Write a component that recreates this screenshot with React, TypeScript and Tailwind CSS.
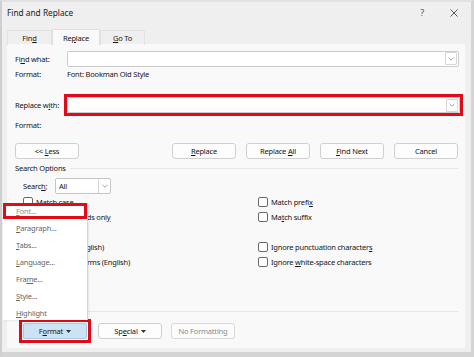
import React from "react";

function U({ children }: { children: React.ReactNode }) {
  return <span className="underline underline-offset-[1px] decoration-[0.5px]">{children}</span>;
}

function Chevron() {
  return (
    <svg width="6" height="4" viewBox="0 0 6 4" className="block">
      <path d="M0.5 0.8 L3 3.2 L5.5 0.8" fill="none" stroke="#8a8a8a" strokeWidth="0.8" />
    </svg>
  );
}

function Caret() {
  return (
    <svg width="5" height="3" viewBox="0 0 5 3" className="inline-block ml-[3px]">
      <path d="M0 0 L5 0 L2.5 3 Z" fill="#333" />
    </svg>
  );
}

function Btn({ children, disabled }: { children: React.ReactNode; disabled?: boolean }) {
  return (
    <div
      className={
        disabled
          ? "w-[64px] h-[16px] flex items-center justify-center bg-[#fbfbfb] border border-[#d9d9d9] rounded-[3px] text-[#8c8c8c]"
          : "w-[64px] h-[16px] flex items-center justify-center bg-[#fdfdfd] border border-[#d0d0d0] rounded-[3px]"
      }
    >
      <span className="whitespace-pre flex items-center">{children}</span>
    </div>
  );
}

function Input() {
  return (
    <div className="flex-1 h-[16px] bg-white border border-[#cbcbcb] rounded-[2px] flex items-center justify-end pr-[1px]">
      <div className="w-[12px] h-[13px] border border-[#d6d6d6] rounded-[1px] bg-white flex items-center justify-center">
        <Chevron />
      </div>
    </div>
  );
}

function Check({ label }: { label?: React.ReactNode }) {
  return (
    <div className="flex items-center h-[15px]">
      {label !== undefined && (
        <>
          <div className="w-[10px] h-[10px] border border-[#6a6a6a] rounded-[2px] bg-white" />
          <span className="ml-[3px] whitespace-nowrap">{label}</span>
        </>
      )}
    </div>
  );
}

export default function App() {
  return (
    <div className="w-[474px] h-[357px] relative overflow-hidden bg-[#efefef] border-l-[2px] border-l-[#cfcfcf] border-r-[3px] border-r-[#d4d4d4] border-b-[5px] border-b-[#d4d4d4] border-t-[2px] border-t-[#e2e2e2] font-['Noto_Sans',sans-serif] text-[7.5px] tracking-[-0.2px] leading-[10px] text-[#141414]">
      {/* Title bar */}
      <div className="h-[27px] flex items-start pt-[5px] pl-[5px] pr-[13px]">
        <span className="text-[8.3px] tracking-[0px] leading-[12px] text-[#1a1a1a]">Find and Replace</span>
        <span className="ml-auto text-[9px] leading-[12px] text-[#555]">?</span>
        <svg width="8" height="8" viewBox="0 0 8 8" className="ml-[26px] mt-[2px]">
          <path d="M0.5 0.5 L7.5 7.5 M7.5 0.5 L0.5 7.5" stroke="#333" strokeWidth="0.8" />
        </svg>
      </div>

      {/* Tabs */}
      <div className="flex ml-[5px] h-[15px]">
        <div className="w-[45px] h-[15px] mt-[1px] border border-b-0 border-[#e2e2e2] flex items-center justify-center">
          <span>Fin<U>d</U></span>
        </div>
        <div className="w-[48px] h-[16px] border border-b-0 border-[#e0e0e0] bg-[#f9f9f9] flex items-center justify-center relative z-10">
          <span>Re<U>p</U>lace</span>
        </div>
        <div className="w-[45px] h-[15px] mt-[1px] border border-b-0 border-[#e2e2e2] flex items-center justify-center">
          <span><U>G</U>o To</span>
        </div>
      </div>

      {/* Panel */}
      <div className="ml-[5px] w-[458px] h-[304px] bg-[#f9f9f9] pl-[8px] pr-[6px] pt-[7px] flex flex-col">
        <div className="flex items-center h-[15px]">
          <span className="w-[52px] whitespace-nowrap">Fi<U>n</U>d what:</span>
          <Input />
        </div>
        <div className="flex items-center h-[10px] mt-[3px]">
          <span className="w-[52px]">Format:</span>
          <span>Font: Bookman Old Style</span>
        </div>

        <div className="flex items-center h-[22px] mt-[15px]">
          <span className="w-[49px] whitespace-nowrap">Replace w<U>i</U>th:</span>
          <div className="flex-1 h-[22px] border-[3px] border-[#e00b16] flex items-center mr-[-4px]">
            <Input />
          </div>
        </div>
        <div className="flex items-center h-[11px] mt-[3px]">
          <span>Format:</span>
        </div>

        {/* Buttons row */}
        <div className="flex items-center mt-[13px] pr-[1px]">
          <Btn>{"<< "}<U>L</U>ess</Btn>
          <div className="ml-auto flex gap-[10px]">
            <Btn><U>R</U>eplace</Btn>
            <Btn>{"Replace "}<U>A</U>ll</Btn>
            <Btn><U>F</U>{"ind Next"}</Btn>
            <Btn>Cancel</Btn>
          </div>
        </div>

        {/* Search options */}
        <div className="flex items-center h-[10px] mt-[4px]">
          <span className="whitespace-nowrap">Search Options</span>
          <div className="flex-1 h-px bg-[#e6e6e6] ml-[4px] mr-[1px]" />
        </div>
        <div className="flex items-center h-[16px] mt-[5px] pl-[8px]">
          <span className="w-[32px]">Searc<U>h</U>;</span>
          <div className="w-[56px] h-[16px] bg-white border border-[#c6c6c6] rounded-[2px] flex items-center">
            <span className="ml-[3px]">All</span>
            <div className="ml-auto w-[12px] h-full border-l border-[#d6d6d6] flex items-center justify-center">
              <Chevron />
            </div>
          </div>
        </div>

        <div className="flex pl-[8px]">
          <div className="w-[235px] flex flex-col">
            <Check label="Match case" />
            <Check label={<>Find whole words onl<U>y</U></>} />
            <Check />
            <Check label={<>Sounds li<U>k</U>e (English)</>} />
            <Check label={<>Find all <U>w</U>ord forms (English)</>} />
          </div>
          <div className="flex flex-col">
            <Check label={<>Match prefi<U>x</U></>} />
            <Check label={<>Ma<U>t</U>ch suffix</>} />
            <Check />
            <Check label={<>Ignore punctuation character<U>s</U></>} />
            <Check label={<>Ignore <U>w</U>hite-space characters</>} />
          </div>
        </div>

        <div className="h-px bg-[#e6e6e6] mt-[42px] mr-[1px]" />

        {/* Bottom buttons */}
        <div className="flex items-center mt-[7px]">
          <div className="ml-[4px] border-[3px] border-[#e00b16] p-[1px]">
            <div className="w-[64px] h-[16px] flex items-center justify-center bg-[#cce3f6] border border-[#a9c9e6] rounded-[2px]">
              <span>F<U>o</U>rmat</span>
              <Caret />
            </div>
          </div>
          <div className="ml-[7px]">
            <Btn>
              Sp<U>e</U>cial
              <Caret />
            </Btn>
          </div>
          <div className="ml-[9px]">
            <Btn disabled>No Formatting</Btn>
          </div>
        </div>
      </div>

      {/* Format dropdown menu */}
      <div className="absolute left-[1px] top-[201px] w-[85px] h-[117px] bg-white border-r border-[#d4d4d4] shadow-[1px_1px_2px_rgba(0,0,0,0.08)] text-[#666666]">
        <div className="h-[16px] border-[3px] border-[#e00b16] flex items-center pl-[10px] text-[#8a8a8a]">
          <span><U>F</U>ont...</span>
        </div>
        <div className="h-[17px] flex items-center pl-[13px]"><span><U>P</U>aragraph...</span></div>
        <div className="h-[17px] flex items-center pl-[13px]"><span><U>T</U>abs...</span></div>
        <div className="h-[17px] flex items-center pl-[13px]"><span><U>L</U>anguage...</span></div>
        <div className="h-[17px] flex items-center pl-[13px]"><span>Fra<U>m</U>e...</span></div>
        <div className="h-[17px] flex items-center pl-[13px]"><span><U>S</U>tyle...</span></div>
        <div className="h-[17px] flex items-center pl-[13px]"><span><U>H</U>ighlight</span></div>
      </div>
    </div>
  );
}
